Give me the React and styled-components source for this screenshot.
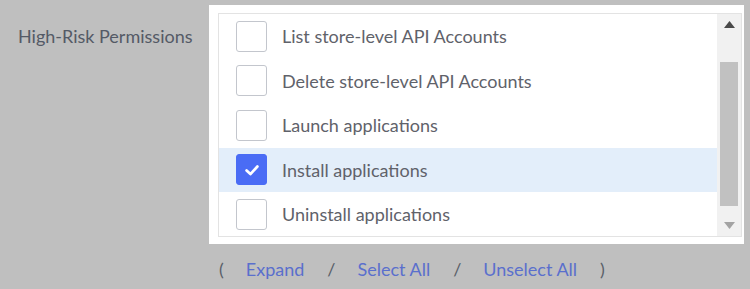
import styled, { createGlobalStyle } from "styled-components";

const GlobalStyle = createGlobalStyle`
  body {
    margin: 0;
    background: #bfbfbf;
    font-family: Lato, "Noto Sans", sans-serif;
  }
`;

const permissions = [
  { label: "List store-level API Accounts", checked: false },
  { label: "Delete store-level API Accounts", checked: false },
  { label: "Launch applications", checked: false },
  { label: "Install applications", checked: true },
  { label: "Uninstall applications", checked: false },
];

export default function App() {
  return (
    <>
      <GlobalStyle />
      <Page>
        <FieldRow>
          <Label>High-Risk Permissions</Label>
          <Panel>
            <ListBox>
              <List>
                {permissions.map((p) => (
                  <Row key={p.label} active={p.checked}>
                    <Box checked={p.checked}>
                      {p.checked && (
                        <svg width="18" height="18" viewBox="0 0 16 16">
                          <path
                            d="M3.2 8.4 L6.6 11.6 L12.8 4.9"
                            fill="none"
                            stroke="#fff"
                            strokeWidth="2.4"
                            strokeLinecap="round"
                            strokeLinejoin="round"
                          />
                        </svg>
                      )}
                    </Box>
                    <RowText>{p.label}</RowText>
                  </Row>
                ))}
              </List>
              <Scrollbar>
                <Arrow>
                  <svg width="11" height="7" viewBox="0 0 11 7">
                    <path d="M0 7 L5.5 0 L11 7 Z" fill="#4a4a4a" />
                  </svg>
                </Arrow>
                <Track>
                  <Thumb />
                </Track>
                <Arrow>
                  <svg width="11" height="7" viewBox="0 0 11 7">
                    <path d="M0 0 L11 0 L5.5 7 Z" fill="#a3a3a3" />
                  </svg>
                </Arrow>
              </Scrollbar>
            </ListBox>
          </Panel>
        </FieldRow>
        <Actions>
          <Paren>(</Paren>
          <Link>Expand</Link>
          <Sep>/</Sep>
          <Link>Select All</Link>
          <Sep>/</Sep>
          <Link>Unselect All</Link>
          <Paren>)</Paren>
        </Actions>
      </Page>
    </>
  );
}

const Page = styled.div`
  padding-top: 5px;
`;

const FieldRow = styled.div`
  display: flex;
  align-items: flex-start;
`;

const Label = styled.div`
  width: 191px;
  padding-left: 18px;
  padding-top: 20px;
  font-size: 18px;
  line-height: 22px;
  color: #545a66;
`;

const Panel = styled.div`
  width: 524px;
  background: #fff;
  padding: 8px 2px 7px 9px;
`;

const ListBox = styled.div`
  display: flex;
  height: 224px;
  border: 1px solid #e3e3e3;
  box-sizing: border-box;
`;

const List = styled.div`
  flex: 1;
  display: flex;
  flex-direction: column;
  overflow: hidden;
`;

const Row = styled.div`
  flex: 0 0 44.5px;
  display: flex;
  align-items: center;
  padding-left: 17px;
  background: ${(p) => (p.active ? "#e3eefa" : "#fff")};
`;

const Box = styled.div`
  width: 31px;
  height: 31px;
  box-sizing: border-box;
  border-radius: 3px;
  border: 1.5px solid ${(p) => (p.checked ? "#4a6cf5" : "#c3c6cd")};
  background: ${(p) => (p.checked ? "#4a6cf5" : "#fff")};
  display: grid;
  place-items: center;
`;

const RowText = styled.span`
  margin-left: 15px;
  font-size: 18px;
  color: #5f626a;
`;

const Scrollbar = styled.div`
  width: 24px;
  background: #f1f1f1;
  display: flex;
  flex-direction: column;
  align-items: center;
`;

const Arrow = styled.div`
  height: 28px;
  display: grid;
  place-items: center;
`;

const Track = styled.div`
  flex: 1;
  width: 100%;
  padding: 27px 3px 10px 3px;
  box-sizing: border-box;
`;

const Thumb = styled.div`
  height: 144px;
  background: #c1c1c1;
`;

const Actions = styled.div`
  display: flex;
  align-items: center;
  padding-left: 219px;
  margin-top: 14px;
  font-size: 18px;
  line-height: 22px;
`;

const Paren = styled.span`
  color: #5a5f69;
`;

const Link = styled.span`
  color: #5a6fcd;
  margin: 0 23px 0 22px;
`;

const Sep = styled.span`
  color: #5a5f69;
`;
